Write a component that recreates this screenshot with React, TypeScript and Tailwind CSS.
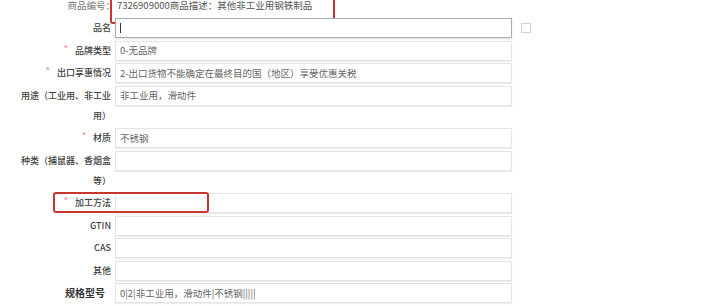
const font = "font-['Noto_Sans_CJK_SC','Noto_Sans',sans-serif]";

type RowProps = {
  label: string;
  required?: boolean;
  value?: string;
  focused?: boolean;
  children?: React.ReactNode;
};

function Row({ label, required, value, focused, children }: RowProps) {
  return (
    <div className="relative flex items-start">
      <div className="w-[94px] shrink-0 text-right text-[9px] font-medium leading-[20px] text-[#3f3f3f]">
        {required && (
          <span className="mr-[7px] align-top text-[9px] font-normal leading-[16px] text-[#e57b7b]">*</span>
        )}
        {label}
      </div>
      <div
        className={
          "ml-[4px] flex h-[20px] w-[397px] shrink-0 items-center border bg-white pl-[4px] text-[9.5px] text-[#666] " +
          (focused
            ? "border-[#a3afaf] shadow-[0_1px_2px_rgba(0,0,0,0.12)]"
            : "border-[#e4e4e4] shadow-[0_1px_1px_rgba(0,0,0,0.07)]")
        }
      >
        {focused && <span className="h-[10px] w-px bg-[#333]" />}
        {value}
      </div>
      {children}
    </div>
  );
}

export default function App() {
  return (
    <div className={"relative h-[306px] w-[720px] overflow-hidden bg-white pl-[17px] " + font}>
      <div className="flex h-[18px] items-start text-[9.5px] leading-[10px]">
        <div className="w-[98px] shrink-0 text-right text-[#777]">商品编号：</div>
        <div className="pl-[2px] text-[#555]">7326909000商品描述：其他非工业用钢铁制品</div>
      </div>
      <div className="absolute left-[110px] top-[-10px] h-[34px] w-[225px] rounded-[3px] border-2 border-[#c8372f]" />

      <div className="flex flex-col gap-[2.5px]">
        <Row label="品名" focused>
          <div className="ml-[9px] mt-[5px] h-[10px] w-[10px] border border-[#d4d4d4] bg-white" />
        </Row>
        <Row label="品牌类型" required value="0-无品牌" />
        <Row label="出口享惠情况" required value="2-出口货物不能确定在最终目的国（地区）享受优惠关税" />
        <Row label="用途（工业用、非工业用）" value="非工业用，滑动件" />
        <Row label="材质" required value="不锈钢" />
        <Row label="种类（捕鼠器、香烟盒等）" />
        <Row label="加工方法" required>
          <div className="absolute left-[36px] top-[-1px] h-[21px] w-[156px] rounded-[3px] border-2 border-[#c8372f]" />
        </Row>
        <Row label="GTIN" />
        <Row label="CAS" />
        <Row label="其他" />
        <div className="flex items-start">
          <div className="w-[94px] shrink-0 pr-[6px] text-right text-[10px] font-bold leading-[20px] text-[#333]">
            规格型号
          </div>
          <div className="ml-[4px] flex h-[20px] w-[397px] items-center border border-[#e4e4e4] bg-white pl-[4px] text-[9.5px] text-[#666] shadow-[0_1px_1px_rgba(0,0,0,0.07)]">
            0|2|非工业用，滑动件|不锈钢|||||
          </div>
        </div>
      </div>
    </div>
  );
}
